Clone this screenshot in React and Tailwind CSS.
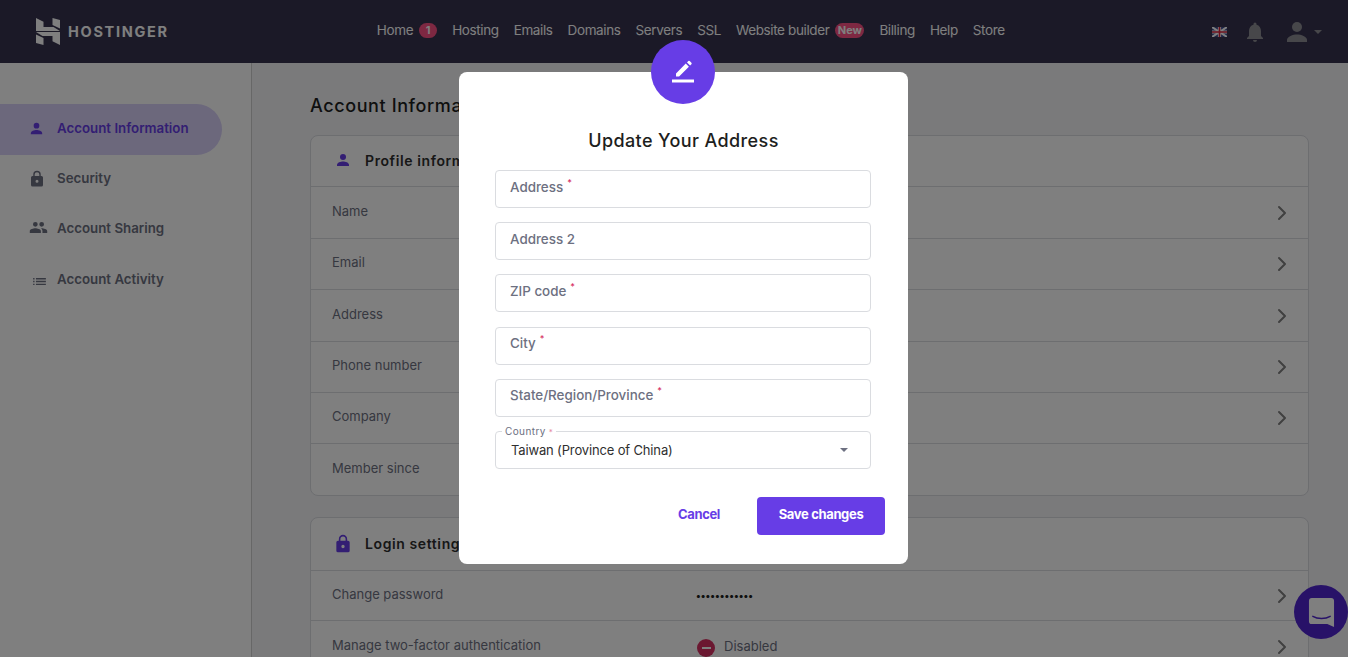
import React from 'react';
import { ChevronRight } from 'lucide-react';

const font = "font-['Inter','Noto_Sans',sans-serif]";

const navItems = [
    { label: 'Home', badge: '1', badgeClass: 'w-[18px]' },
    { label: 'Hosting' },
    { label: 'Emails' },
    { label: 'Domains' },
    { label: 'Servers' },
    { label: 'SSL' },
    { label: 'Website builder', badge: 'New', badgeClass: 'w-[29px]' },
    { label: 'Billing' },
    { label: 'Help' },
    { label: 'Store' },
];

const profileRows = [
    { label: 'Name', rowClass: 'h-[52px] border-b' },
    { label: 'Email', rowClass: 'h-[51px] border-b' },
    { label: 'Address', rowClass: 'h-[52px] border-b' },
    { label: 'Phone number', rowClass: 'h-[51px] border-b' },
    { label: 'Company', rowClass: 'h-[51px] border-b' },
    { label: 'Member since', rowClass: 'h-[51px]', noArrow: true },
];

const fields = [
    { label: 'Address', required: true },
    { label: 'Address 2' },
    { label: 'ZIP code', required: true },
    { label: 'City', required: true },
    { label: 'State/Region/Province', required: true },
];

const PersonIcon = ({ className }) => (
    <svg viewBox="0 0 24 24" className={className} fill="currentColor">
        <circle cx="12" cy="8" r="4" />
        <path d="M12 14c-3.200 0-8 1.600-8 4.400V20h16v-1.600c0-2.800-4.800-4.400-8-4.400z" />
    </svg>
);

const LockIcon = ({ className }) => (
    <svg viewBox="0 0 24 24" className={className} fill="currentColor">
        <path d="M18 8h-1V6a5 5 0 0 0-10 0v2H6a2 2 0 0 0-2 2v10a2 2 0 0 0 2 2h12a2 2 0 0 0 2-2V10a2 2 0 0 0-2-2zm-6 9a2 2 0 1 1 0-4 2 2 0 0 1 0 4zm3.100-9H8.900V6a3.100 3.100 0 0 1 6.200 0v2z" />
    </svg>
);

const PeopleIcon = ({ className }) => (
    <svg viewBox="0 0 24 24" className={className} fill="currentColor">
        <path d="M16 11a3 3 0 1 0 0-6 3 3 0 0 0 0 6zm-8 0a3 3 0 1 0 0-6 3 3 0 0 0 0 6zm0 2c-2.330 0-7 1.170-7 3.500V19h14v-2.500C15 14.170 10.330 13 8 13zm8 0c-.29 0-.62.020-.97.050 1.160.84 1.970 1.970 1.970 3.450V19h6v-2.500c0-2.330-4.670-3.500-7-3.500z" />
    </svg>
);

const ListIcon = ({ className }) => (
    <svg viewBox="0 0 24 24" className={className} fill="currentColor">
        <path d="M3 13h2v-2H3v2zm0 4h2v-2H3v2zm0-8h2V7H3v2zm4 4h14v-2H7v2zm0 4h14v-2H7v2zM7 7v2h14V7H7z" />
    </svg>
);

const BellIcon = ({ className }) => (
    <svg viewBox="0 0 24 24" className={className} fill="currentColor">
        <path d="M12 22a2 2 0 0 0 2-2h-4a2 2 0 0 0 2 2zm6-6v-5c0-3.070-1.640-5.640-4.500-6.320V4a1.500 1.500 0 0 0-3 0v.68C7.630 5.360 6 7.920 6 11v5l-2 2v1h16v-1l-2-2z" />
    </svg>
);

const Logo = () => (
    <svg viewBox="0 0 24 27" className="h-[27px] w-6" fill="#fff">
        <path d="M0 0l7.500 3.800V9h10l6.500 4H0z" />
        <path d="M16.500 0L24 2v8.500l-7.500-3.500z" />
        <path d="M24 27l-7.500-3.800V18h-10L0 14h24z" />
        <path d="M7.500 27L0 25v-8.500l7.500 3.500z" />
    </svg>
);

const UkFlag = () => (
    <svg viewBox="0 0 15 10" className="h-[10px] w-[15px]">
        <rect width="15" height="10" fill="#3b4a8c" />
        <path d="M0 0l15 10M15 0L0 10" stroke="#fff" strokeWidth="2" />
        <path d="M7.500 0v10M0 5h15" stroke="#fff" strokeWidth="3.200" />
        <path d="M7.500 0v10M0 5h15" stroke="#d8203a" strokeWidth="1.600" />
    </svg>
);

const SideItem = ({ icon: Icon, label, active, iconClass }) => (
    <div
        className={`flex h-[50.300px] w-[222px] items-center rounded-r-[26px] pb-[2px] text-[13.300px] font-semibold ${
            active ? 'h-[51px] bg-[#d8d0f8] text-[#673de6]' : 'text-[#6d7081]'
        }`}
    >
        <span className="flex w-[57px] justify-center pl-[16px]">
            <Icon className={iconClass} />
        </span>
        <span>{label}</span>
    </div>
);

const Row = ({ label, noArrow, children }) => (
    <div className="flex h-full items-center pl-[21px] pr-[14px] text-[13px] text-[#6d7081]">
        <span className="w-[364px] pb-[2px]">{label}</span>
        <div className="flex-1">{children}</div>
        {!noArrow && <ChevronRight className="h-6 w-6 text-[#808080]" strokeWidth={2} />}
    </div>
);

const Field = ({ label, required }) => (
    <div className="flex h-[38px] items-start rounded-[4px] border border-[#dadce0] px-[14px] pt-[5.700px] text-[13.400px] font-medium text-[#6d7081]">
        <span>{label}</span>
        {required && <span className="ml-[4px] mt-[-1px] text-[9px] text-[#d63163]">*</span>}
    </div>
);

const App = () => {
    return (
        <div className={`relative h-screen overflow-hidden bg-white ${font}`}>
            {/* Header */}
            <header className="relative flex h-[63px] items-center bg-[#36324f]">
                <div className="flex items-center pl-[36px]">
                    <Logo />
                    <span className="ml-[8px] text-[14.500px] font-bold tracking-[1.700px] text-white">HOSTINGER</span>
                </div>
                <nav className="ml-[208px] flex items-center gap-[15px] pb-[3px] text-[13.500px] tracking-[-0.380px] text-white">
                    {navItems.map((item) => (
                        <div key={item.label} className="flex items-center">
                            <span>{item.label}</span>
                            {item.badge && (
                                <span
                                    className={`ml-[6px] mt-[1px] flex h-[15px] items-center justify-center rounded-full bg-[#fc5185] text-[11px] font-bold tracking-normal text-white ${item.badgeClass}`}
                                >
                                    {item.badge}
                                </span>
                            )}
                        </div>
                    ))}
                </nav>
                <div className="ml-auto flex items-center pr-[26px] text-[#8f8f95]">
                    <UkFlag />
                    <BellIcon className="ml-[16px] h-6 w-6" />
                    <PersonIcon className="ml-[15px] h-[30px] w-[30px]" />
                    <span className="ml-[2px] h-0 w-0 border-x-[4px] border-t-[4px] border-x-transparent border-t-[#8f8f95]" />
                </div>
            </header>

            <div className="flex">
                {/* Sidebar */}
                <aside className="h-[594px] w-[252px] shrink-0 border-r border-[#cfcfcf] pt-[41px]">
                    <SideItem icon={PersonIcon} label="Account Information" active iconClass="h-[17px] w-[17px]" />
                    <SideItem icon={LockIcon} label="Security" iconClass="h-[18px] w-[18px]" />
                    <SideItem icon={PeopleIcon} label="Account Sharing" iconClass="ml-[4px] mt-[-3px] h-[19px] w-[19px]" />
                    <SideItem icon={ListIcon} label="Account Activity" iconClass="ml-[5px] mt-[3px] h-[17px] w-[17px]" />
                </aside>

                {/* Main content */}
                <main className="flex-1 bg-[#f4f4f7] pl-[58px] pr-[39px] pt-[33px]">
                    <h1 className="text-[18px] font-medium leading-[20px] tracking-[0.600px] text-[#1d1e20]">Account Information</h1>

                    <section className="mt-[19px] rounded-[8px] border border-[#dadce0] bg-white">
                        <div className="flex h-[51px] items-center border-b border-[#dadce0] pb-[2px] pl-[23px] text-[14px] font-semibold tracking-[0.600px] text-[#2f2f2f]">
                            <PersonIcon className="mr-[13px] h-[18px] w-[18px] text-[#673de6]" />
                            Profile information
                        </div>
                        {profileRows.map((row) => (
                            <div key={row.label} className={`border-[#dadce0] ${row.rowClass}`}>
                                <Row label={row.label} noArrow={row.noArrow} />
                            </div>
                        ))}
                    </section>

                    <section className="mt-[21px] rounded-[8px] border border-[#dadce0] bg-white">
                        <div className="flex h-[53px] items-center border-b border-[#dadce0] pb-[1px] pl-[22px] text-[14px] font-semibold tracking-[0.600px] text-[#2f2f2f]">
                            <LockIcon className="mr-[12px] h-5 w-5 text-[#673de6]" />
                            Login settings
                        </div>
                        <div className="h-[50px] border-b border-[#dadce0]">
                            <Row label="Change password">
                                <span className="block pb-[2px] text-[10px] font-bold leading-none tracking-[0px] text-[#1d1e20]">••••••••••••</span>
                            </Row>
                        </div>
                        <div className="h-[51px]">
                            <Row label="Manage two-factor authentication">
                                <span className="flex items-center">
                                    <span className="ml-[1px] mr-[9px] mt-[2px] flex h-[18px] w-[18px] items-center justify-center rounded-full bg-[#d63163]">
                                        <span className="h-[2px] w-[9px] bg-white" />
                                    </span>
                                    Disabled
                                </span>
                            </Row>
                        </div>
                    </section>
                </main>
            </div>

            {/* Chat bubble */}
            <div className="absolute left-[1294px] top-[585px] flex h-[54px] w-[54px] items-center justify-center rounded-full bg-[#5025d1]">
                <svg viewBox="0 0 28 32" className="h-[31px] w-[27px]">
                    <path d="M4 1h20a3 3 0 0 1 3 3v27l-7-3H4a3 3 0 0 1-3-3V4a3 3 0 0 1 3-3z" fill="#fff" />
                    <path d="M5 20c5 3 13 3 18 0" fill="none" stroke="#5025d1" strokeWidth="1.500" strokeLinecap="round" />
                </svg>
            </div>

            {/* Backdrop */}
            <div className="absolute inset-0 bg-black/50" />

            {/* Modal */}
            <div className="absolute left-[459px] top-[72px] h-[492px] w-[449px] rounded-[8px] bg-white pt-[58px]">
                <div className="absolute left-[192px] top-[-32px] flex h-[64px] w-[64px] items-center justify-center rounded-full bg-[#673de6]">
                    <svg viewBox="0 0 24 24" className="h-6 w-6" fill="#fff">
                        <path d="M1 19.500h22v3H1z" />
                        <path d="M5 16.500v-3.100L14.800 3.600l3.100 3.100L8.100 16.500H5zM16 2.400l1.300-1.300a1 1 0 0 1 1.400 0l1.700 1.700a1 1 0 0 1 0 1.400L19.100 5.500 16 2.400z" />
                    </svg>
                </div>
                <h2 className="text-center text-[18px] font-medium leading-[22px] tracking-[0.400px] text-[#1d1e20]">Update Your Address</h2>

                <div className="ml-[36px] mt-[18px] flex w-[376px] flex-col gap-[14.200px]">
                    {fields.map((field) => (
                        <Field key={field.label} label={field.label} required={field.required} />
                    ))}
                    <div className="relative flex h-[38px] items-center justify-between rounded-[4px] border border-[#dadce0] pl-[15px] pr-[22px] pt-[1px] text-[13px] tracking-[-0.150px] text-[#2f2f2f]">
                        <span className="absolute left-[6px] top-[-7px] bg-white px-[3px] text-[10px] leading-[12px] tracking-[0.400px] text-[#6d7081]">
                            Country<span className="ml-[3px] text-[8px] text-[#e58aa5]">*</span>
                        </span>
                        <span>Taiwan (Province of China)</span>
                        <span className="h-0 w-0 border-x-[4.500px] border-t-[4.500px] border-x-transparent border-t-[#6d7081]" />
                    </div>
                </div>

                <div className="mt-[28px] flex items-center justify-end pr-[23px] text-[13px] font-bold tracking-[-0.350px]">
                    <button className="mr-[37px] pb-[3px] text-[#673de6]">Cancel</button>
                    <button className="h-[38px] w-[128px] rounded-[4px] bg-[#673de6] pb-[3px] text-white">Save changes</button>
                </div>
            </div>
        </div>
    );
};

export default App;
